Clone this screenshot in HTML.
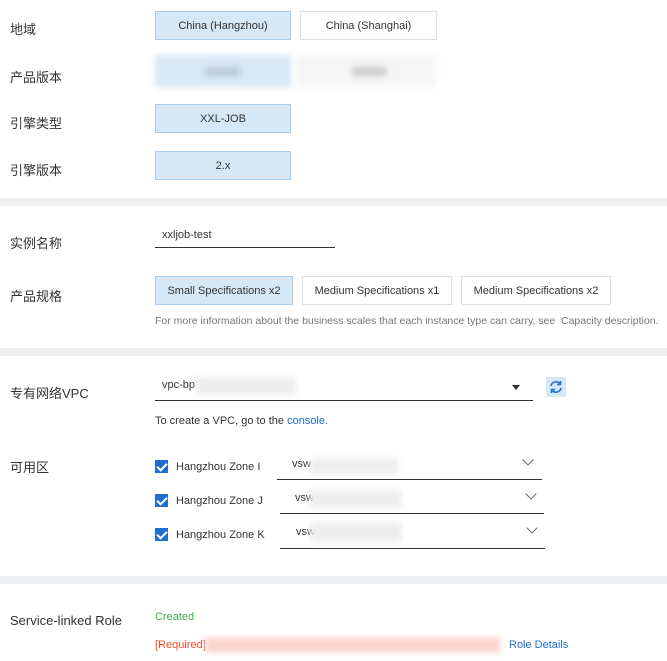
<!DOCTYPE html><html><head><style>
*{margin:0;padding:0;box-sizing:border-box}
body{width:667px;height:661px;background:#fff;font-family:"Liberation Sans","Noto Sans CJK SC",sans-serif;color:#333;position:relative;overflow:hidden}
.a{position:absolute;white-space:nowrap}
.lbl{font-size:13px;color:#333}
.btn{position:absolute;height:29px;border:1px solid #ddd;background:#fff;font-size:11px;text-align:center;line-height:29px;color:#333}
.sel{background:#d6e7f5;border-color:#a9cdee}
.sep{position:absolute;left:0;width:667px;height:8px;background:#eff0f2}
.line{position:absolute;height:1px;background:#333}
.blur{position:absolute;background:#eeeeee;filter:blur(3px)}
.cb{position:absolute;width:13px;height:13px;background:#1f6fcf}
.cb:after{content:"";position:absolute;left:4px;top:1px;width:4px;height:8px;border:solid #fff;border-width:0 2px 2px 0;transform:rotate(45deg)}
.chev{position:absolute;width:8px;height:8px;border:solid #666;border-width:0 1.3px 1.3px 0;transform:rotate(45deg)}
.s{font-size:11px}
</style></head><body>
<div class="a lbl" style="left:10px;top:19px">地域</div>
<div class="btn sel" style="left:155px;top:11px;width:136px">China (Hangzhou)</div>
<div class="btn" style="left:300px;top:11px;width:137px">China (Shanghai)</div>
<div class="a lbl" style="left:10px;top:67px">产品版本</div>
<div class="blur" style="left:155px;top:55px;width:136px;height:32px;background:#d8e8f5"></div>
<div class="blur" style="left:295px;top:55px;width:142px;height:32px;background:#f6f6f6"></div>
<div class="blur" style="left:205px;top:67px;width:35px;height:9px;background:#bccad6"></div>
<div class="blur" style="left:352px;top:67px;width:35px;height:9px;background:#ccc"></div>
<div class="a lbl" style="left:10px;top:113px">引擎类型</div>
<div class="btn sel" style="left:155px;top:104px;width:136px">XXL-JOB</div>
<div class="a lbl" style="left:10px;top:160px">引擎版本</div>
<div class="btn sel" style="left:155px;top:151px;width:136px">2.x</div>
<div class="sep" style="top:198px"></div>

<div class="a lbl" style="left:10px;top:233px">实例名称</div>
<div class="a s" style="left:162px;top:229px">xxljob-test</div>
<div class="line" style="left:155px;top:247px;width:180px"></div>
<div class="a lbl" style="left:10px;top:286px">产品规格</div>
<div class="btn sel" style="left:155px;top:276px;width:138px">Small Specifications x2</div>
<div class="btn" style="left:302px;top:276px;width:150px">Medium Specifications x1</div>
<div class="btn" style="left:461px;top:276px;width:150px">Medium Specifications x2</div>
<div class="a s" style="left:155px;top:315px;color:#777;font-size:10.5px">For more information about the business scales that each instance type can carry, see &nbsp;Capacity description.</div>
<div class="sep" style="top:348px"></div>

<div class="a lbl" style="left:10px;top:383px">专有网络VPC</div>
<div class="a s" style="left:162px;top:379px">vpc-bp</div>
<div class="blur" style="left:196px;top:377px;width:100px;height:18px"></div>
<div class="a" style="left:512px;top:385px;border-left:4px solid transparent;border-right:4px solid transparent;border-top:5px solid #333"></div>
<div class="line" style="left:155px;top:400px;width:378px"></div>
<div class="a" style="left:546px;top:377px;width:20px;height:20px;background:#d6e7f5"></div>
<svg class="a" style="left:548px;top:379px" width="16" height="16" viewBox="0 0 16 16" fill="none" stroke="#1f6fcf" stroke-width="1.6"><path d="M3 7a5 5 0 0 1 9-2"/><path d="M12.5 2v3.5H9"/><path d="M13 9a5 5 0 0 1-9 2"/><path d="M3.5 14v-3.5H7"/></svg>
<div class="a s" style="left:155px;top:415px;color:#333">To create a VPC, go to the <span style="color:#1f6fcf">console.</span></div>
<div class="a lbl" style="left:10px;top:457px">可用区</div>

<div class="cb" style="left:155px;top:460px"></div>
<div class="a s" style="left:176px;top:461px">Hangzhou Zone I</div>
<div class="a s" style="left:292px;top:458px">vsw</div>
<div class="blur" style="left:310px;top:458px;width:88px;height:16px"></div>
<div class="chev" style="left:524px;top:456px"></div>
<div class="line" style="left:277px;top:479px;width:265px"></div>

<div class="cb" style="left:155px;top:494px"></div>
<div class="a s" style="left:176px;top:495px">Hangzhou Zone J</div>
<div class="a s" style="left:295px;top:492px">vsw</div>
<div class="blur" style="left:310px;top:490px;width:92px;height:18px"></div>
<div class="chev" style="left:527px;top:490px"></div>
<div class="line" style="left:280px;top:513px;width:264px"></div>

<div class="cb" style="left:155px;top:528px"></div>
<div class="a s" style="left:176px;top:529px">Hangzhou Zone K</div>
<div class="a s" style="left:296px;top:526px">vsw</div>
<div class="blur" style="left:310px;top:522px;width:92px;height:20px"></div>
<div class="chev" style="left:528px;top:524px"></div>
<div class="line" style="left:280px;top:548px;width:265px"></div>
<div class="sep" style="top:576px"></div>

<div class="a lbl" style="left:10px;top:613px">Service-linked Role</div>
<div class="a s" style="left:155px;top:611px;color:#3fae49">Created</div>
<div class="a s" style="left:155px;top:639px;color:#f24b2c">[Required]</div>
<div class="blur" style="left:205px;top:637px;width:295px;height:16px;background:#fbd6d0"></div>
<div class="a s" style="left:509px;top:639px;color:#1f6fcf">Role Details</div>
</body></html>
